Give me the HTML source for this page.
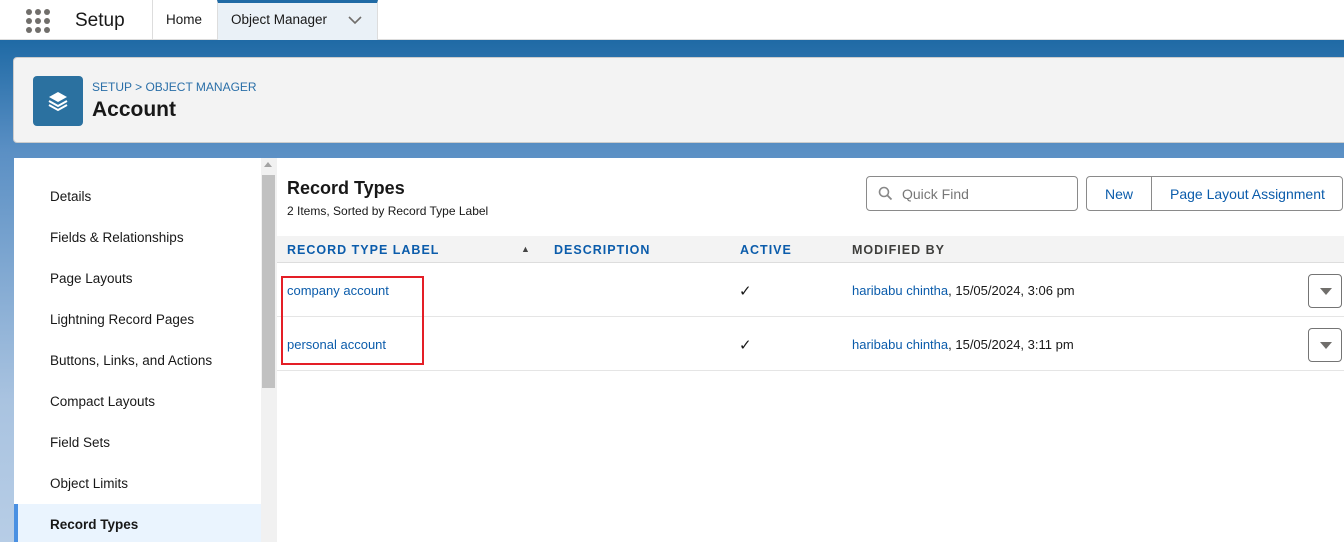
<!DOCTYPE html>
<html><head><meta charset="utf-8"><style>
*{margin:0;padding:0;box-sizing:border-box}
html{width:1344px;height:542px;overflow:hidden}
body{width:1344px;height:542px;overflow:hidden;font-family:"Liberation Sans",sans-serif;font-size:13px;color:#181818;position:relative;background:linear-gradient(180deg,#1f6aa5 40px,#5a8fc4 150px,#a9c3e0 400px,#b7cde6 542px)}
.top{position:absolute;left:0;top:0;width:1344px;height:40px;background:#fff;border-bottom:1px solid #ddd}
.dots{position:absolute;left:26px;top:9px;width:24px;height:24px}
.dots i{position:absolute;width:6px;height:6px;border-radius:50%;background:#706e6b}
.a{position:absolute;white-space:nowrap}
.card{position:absolute;left:13px;top:57px;width:1340px;height:86px;background:#f3f3f3;border:1px solid #ccc;border-radius:4px}
.side{position:absolute;left:14px;top:158px;width:263px;height:400px;background:#fff}
.side div{position:absolute;left:36px;font-size:13.5px;color:#181818}
.main{position:absolute;left:277px;top:158px;width:1067px;height:400px;background:#fff}
.blue{color:#0b5cab}
.th{position:absolute;top:78px;left:0;width:1067px;height:27px;background:#f3f3f3;border-bottom:1px solid #ddd}
.th span{position:absolute;top:7px;font-size:12.5px;font-weight:bold;letter-spacing:1px;color:#0b5cab}
.row{position:absolute;left:0;width:1067px;height:54px;border-bottom:1px solid #e5e5e5}
.row span{position:absolute;top:20px;font-size:13px}
.dd{position:absolute;left:1031px;top:11px;width:34px;height:34px;border:1px solid #747474;border-radius:4px;background:#fff}
.dd:after{content:"";position:absolute;left:11px;top:13px;border-left:6px solid transparent;border-right:6px solid transparent;border-top:7px solid #706e6b}
</style></head><body>
<div class="top">
 <div class="dots"><i style="left:0;top:0"></i><i style="left:9px;top:0"></i><i style="left:18px;top:0"></i><i style="left:0;top:9px"></i><i style="left:9px;top:9px"></i><i style="left:18px;top:9px"></i><i style="left:0;top:18px"></i><i style="left:9px;top:18px"></i><i style="left:18px;top:18px"></i></div>
 <div class="a" style="left:75px;top:10px;font-size:19px;color:#181818">Setup</div>
 <div style="position:absolute;left:152px;top:0;width:1px;height:40px;background:#ddd"></div>
 <div class="a" style="left:166px;top:12px;font-size:13.5px">Home</div>
 <div style="position:absolute;left:217px;top:0;width:161px;height:40px;background:#eaf1f7;border-top:3px solid #1f6aa5;border-left:1px solid #ddd;border-right:1px solid #ddd"></div>
 <div class="a" style="left:231px;top:12px;font-size:13.5px">Object Manager</div>
 <svg class="a" style="left:348px;top:15px" width="14" height="10"><path d="M1 2l6 6 6-6" fill="none" stroke="#706e6b" stroke-width="1.6"/></svg>
</div>
<div class="card">
 <div style="position:absolute;left:19px;top:18px;width:50px;height:50px;background:#2b71a0;border-radius:4px"></div>
 <svg class="a" style="left:32px;top:31px" width="24" height="24" viewBox="0 0 24 24"><path d="M12 3l9 5-9 5-9-5z" fill="#fff"/><path d="M3 12l9 5 9-5M3 16l9 5 9-5" fill="none" stroke="#fff" stroke-width="2"/></svg>
 <div class="a blue" style="left:78px;top:22px;font-size:12px;color:#2a6fa8">SETUP &gt; OBJECT MANAGER</div>
 <div class="a" style="left:78px;top:40px;font-size:21px;font-weight:bold">Account</div>
</div>
<div class="side">
 <div style="top:31px">Details</div>
 <div style="top:72px">Fields &amp; Relationships</div>
 <div style="top:113px">Page Layouts</div>
 <div style="top:154px">Lightning Record Pages</div>
 <div style="top:195px">Buttons, Links, and Actions</div>
 <div style="top:236px">Compact Layouts</div>
 <div style="top:277px">Field Sets</div>
 <div style="top:318px">Object Limits</div>
 <div style="top:346px;left:0;width:247px;height:60px;background:#eaf4fe;border-left:4px solid #4a90e2"></div>
 <div style="top:359px;font-weight:bold">Record Types</div>
 <div style="top:0;left:247px;width:16px;height:400px;background:#f1f1f1"></div>
 <div style="top:17px;left:248px;width:13px;height:213px;background:#c1c1c1"></div>
 <div style="top:4px;left:250px;width:0;height:0;border-left:4px solid transparent;border-right:4px solid transparent;border-bottom:5px solid #a3a3a3"></div>
</div>
<div class="main">
 <div class="a" style="left:10px;top:20px;font-size:18px;font-weight:bold">Record Types</div>
 <div class="a" style="left:10px;top:46px;font-size:12px">2 Items, Sorted by Record Type Label</div>
 <div style="position:absolute;left:589px;top:18px;width:212px;height:35px;border:1px solid #8a8a8a;border-radius:4px"></div>
 <svg class="a" style="left:601px;top:28px" width="15" height="15"><circle cx="6" cy="6" r="4.5" fill="none" stroke="#888" stroke-width="1.6"/><path d="M9.5 9.5l4 4" stroke="#888" stroke-width="1.8"/></svg>
 <div class="a" style="left:625px;top:28px;font-size:14px;color:#777">Quick Find</div>
 <div style="position:absolute;left:809px;top:18px;width:257px;height:35px;border:1px solid #8a8a8a;border-radius:4px"></div>
 <div style="position:absolute;left:874px;top:18px;width:1px;height:35px;background:#8a8a8a"></div>
 <div class="a blue" style="left:828px;top:28px;font-size:14px">New</div>
 <div class="a blue" style="left:893px;top:28px;font-size:14px">Page Layout Assignment</div>
 <div class="th"><span style="left:10px">RECORD TYPE LABEL</span><span style="left:244px;top:8px;font-size:9px;color:#444">▲</span><span style="left:277px">DESCRIPTION</span><span style="left:463px">ACTIVE</span><span style="left:575px;color:#3e3e3c">MODIFIED BY</span></div>
 <div class="row" style="top:105px"><span class="blue" style="left:10px">company account</span><span style="left:462px;top:19px;font-size:15px">✓</span><span style="left:575px"><span class="blue" style="position:static">haribabu chintha</span>, 15/05/2024, 3:06 pm</span><div class="dd"></div></div>
 <div class="row" style="top:159px"><span class="blue" style="left:10px">personal account</span><span style="left:462px;top:19px;font-size:15px">✓</span><span style="left:575px"><span class="blue" style="position:static">haribabu chintha</span>, 15/05/2024, 3:11 pm</span><div class="dd"></div></div>
 <div style="position:absolute;left:4px;top:118px;width:143px;height:89px;border:2px solid #e41e26"></div>
</div>
</body></html>
